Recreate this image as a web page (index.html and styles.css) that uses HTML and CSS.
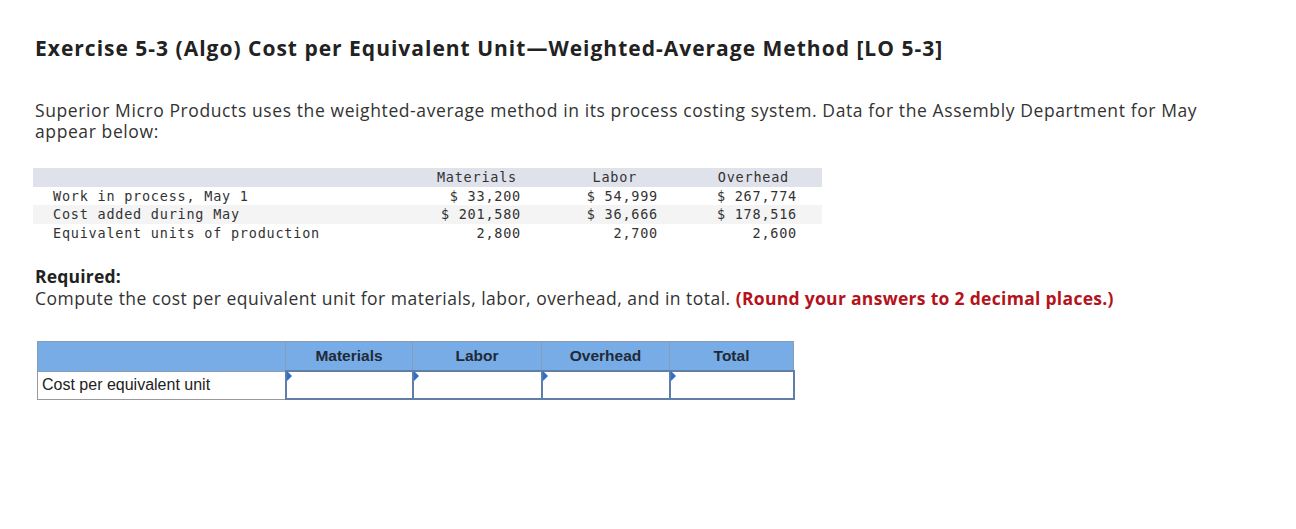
FILE: index.html
```html
<!DOCTYPE html>
<html>
<head>
<meta charset="utf-8">
<link rel="stylesheet" href="styles.css">
</head>
<body>
<div class="page">
  <h1 class="title">Exercise 5-3 (Algo) Cost per Equivalent Unit—Weighted-Average Method [LO 5-3]</h1>
  <p class="intro">Superior Micro Products uses the weighted-average method in its process costing system. Data for the Assembly Department for May appear below:</p>

  <table class="data">
    <tr class="shade-head">
      <td class="lbl"></td>
      <td class="c1 head">Materials</td>
      <td class="c2 head">Labor</td>
      <td class="c3 head">Overhead</td>
      <td class="pad"></td>
    </tr>
    <tr>
      <td class="lbl">Work in process, May 1</td>
      <td class="c1">$ 33,200</td>
      <td class="c2">$ 54,999</td>
      <td class="c3">$ 267,774</td>
      <td class="pad"></td>
    </tr>
    <tr class="shade">
      <td class="lbl">Cost added during May</td>
      <td class="c1">$ 201,580</td>
      <td class="c2">$ 36,666</td>
      <td class="c3">$ 178,516</td>
      <td class="pad"></td>
    </tr>
    <tr>
      <td class="lbl">Equivalent units of production</td>
      <td class="c1">2,800</td>
      <td class="c2">2,700</td>
      <td class="c3">2,600</td>
      <td class="pad"></td>
    </tr>
  </table>

  <div class="required">
    <div class="req-label">Required:</div>
    <div class="req-text">Compute the cost per equivalent unit for materials, labor, overhead, and in total. <span class="red">(Round your answers to 2 decimal places.)</span></div>
  </div>

  <table class="answer">
    <colgroup>
      <col class="w-lbl">
      <col class="w-mat">
      <col class="w-lab">
      <col class="w-ovh">
      <col class="w-tot">
    </colgroup>
    <tr class="ahead">
      <th></th>
      <th>Materials</th>
      <th>Labor</th>
      <th>Overhead</th>
      <th>Total</th>
    </tr>
    <tr>
      <td class="a-lbl">Cost per equivalent unit</td>
      <td class="a-in"><span class="flag"></span></td>
      <td class="a-in"><span class="flag"></span></td>
      <td class="a-in"><span class="flag"></span></td>
      <td class="a-in"><span class="flag"></span></td>
    </tr>
  </table>
</div>
</body>
</html>
```
FILE: styles.css
```css
html, body {
  margin: 0;
  padding: 0;
  background: #ffffff;
}
.page {
  padding: 36px 0 0 35px;
  font-family: "Open Sans", "Liberation Sans", sans-serif;
  color: #333333;
}
.title {
  margin: 0;
  font-size: 21px;
  font-weight: 700;
  line-height: 24px;
  color: #222222;
  letter-spacing: 1px;
}
.intro {
  margin: 40px 0 0 0;
  width: 1175px;
  font-size: 17.5px;
  line-height: 21px;
  letter-spacing: 0.6px;
  color: #333333;
}
.data {
  margin: 26px 0 0 -2px;
  border-collapse: collapse;
  font-family: "DejaVu Sans Mono", "Liberation Mono", monospace;
  font-size: 13.5px;
  letter-spacing: 0.77px;
  color: #333333;
}
.data td {
  padding: 0;
  height: 18.5px;
  line-height: 18.5px;
  white-space: nowrap;
}
.data .shade-head td { background: #dfe2ea; }
.data .shade td { background: #f4f4f5; }
.data .lbl { width: 361px; padding-left: 20px; }
.data .c1 { width: 103px; text-align: right; }
.data .c2 { width: 116px; text-align: right; }
.data .c3 { width: 131px; text-align: right; }
.data .c1.head { padding-right: 4px; }
.data .c2.head { padding-right: 21px; }
.data .c3.head { padding-right: 8px; }
.data .pad { width: 25px; }
.required {
  margin-top: 23px;
  font-size: 17.5px;
  line-height: 22px;
  letter-spacing: 0.48px;
}
.req-label {
  font-weight: 700;
  color: #222222;
  letter-spacing: 0.2px;
}
.red {
  color: #b5121b;
  font-weight: 700;
  letter-spacing: 0.3px;
}
.answer {
  margin: 32px 0 0 2px;
  border-collapse: collapse;
  table-layout: fixed;
  width: 757px;
  font-family: "Liberation Sans", Arial, sans-serif;
  font-size: 16px;
  color: #222222;
}
.w-lbl { width: 248px; }
.w-mat { width: 127px; }
.w-lab { width: 129px; }
.w-ovh { width: 128px; }
.w-tot { width: 124px; }
.answer th {
  background: #78ace6;
  border: 1px solid #8a9cb3;
  height: 28px;
  padding: 0;
  font-weight: 700;
  font-size: 15.5px;
  color: #1f2a36;
}
.answer td.a-lbl {
  border: 1px solid #999999;
  height: 27px;
  padding: 0 0 0 4px;
  text-align: left;
}
.answer td.a-in {
  border: 2px solid #5f7fa8;
  height: 25px;
  padding: 0;
  position: relative;
  background: #ffffff;
}
.flag {
  position: absolute;
  left: 0;
  top: 0;
  width: 0;
  height: 0;
  border-top: 5px solid transparent;
  border-bottom: 5px solid transparent;
  border-left: 5px solid #2f6fc7;
  margin-top: -1px;
}
```
